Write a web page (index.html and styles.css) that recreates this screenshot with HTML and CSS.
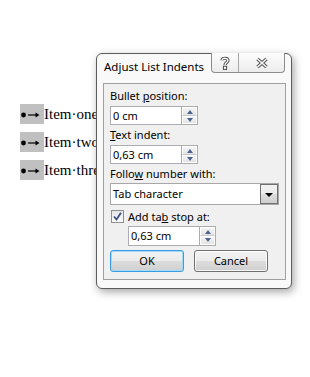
FILE: index.html
```html
<!DOCTYPE html>
<html lang="en">

<head>
    <meta charset="UTF-8">
    <title>Adjust List Indents</title>
    <link rel="stylesheet" href="styles.css">
</head>

<body>
    <div class="doc">
        <div class="item">
            <span class="mark">
                <svg width="24" height="20" viewBox="0 0 24 20">
                    <circle cx="3.5" cy="11" r="2.4" fill="#000" />
                    <path d="M8 11H17" stroke="#000" stroke-width="1.2" />
                    <path d="M15.5 8.6L19.5 11L15.5 13.4Z" fill="#000" />
                </svg>
            </span>
            <span class="item-text">Item·one</span>
        </div>
        <div class="item">
            <span class="mark">
                <svg width="24" height="20" viewBox="0 0 24 20">
                    <circle cx="3.5" cy="11" r="2.4" fill="#000" />
                    <path d="M8 11H17" stroke="#000" stroke-width="1.2" />
                    <path d="M15.5 8.6L19.5 11L15.5 13.4Z" fill="#000" />
                </svg>
            </span>
            <span class="item-text">Item·two</span>
        </div>
        <div class="item">
            <span class="mark">
                <svg width="24" height="20" viewBox="0 0 24 20">
                    <circle cx="3.5" cy="11" r="2.4" fill="#000" />
                    <path d="M8 11H17" stroke="#000" stroke-width="1.2" />
                    <path d="M15.5 8.6L19.5 11L15.5 13.4Z" fill="#000" />
                </svg>
            </span>
            <span class="item-text">Item·three</span>
        </div>
    </div>

    <div class="dialog">
        <div class="titlebar">
            <span class="title">Adjust List Indents</span>
            <div class="caption-btns">
                <span class="cap-btn help">
                    <svg width="12" height="14" viewBox="0 0 12 14">
                        <path d="M3 4.2C3 1.6 9 1.6 9 4.4C9 6.6 6 6.4 6 9" fill="none" stroke="#4a4a4a" stroke-width="3.2" />
                        <path d="M3 4.2C3 1.6 9 1.6 9 4.4C9 6.6 6 6.4 6 9" fill="none" stroke="#fff" stroke-width="1.3" />
                        <rect x="4.4" y="10.2" width="3.2" height="3.2" fill="#fff" stroke="#4a4a4a" stroke-width="1" />
                    </svg>
                </span>
                <span class="cap-btn close">
                    <svg width="14" height="12" viewBox="0 0 14 12">
                        <path d="M2.5 2L11.5 10M11.5 2L2.5 10" stroke="#555" stroke-width="3.6" />
                        <path d="M2.5 2L11.5 10M11.5 2L2.5 10" stroke="#f4f4f4" stroke-width="1.6" />
                    </svg>
                </span>
            </div>
        </div>

        <div class="panel">
            <div class="label">Bullet <u>p</u>osition:</div>
            <div class="spin">
                <div class="edit">0 cm</div>
                <div class="updown">
                    <span class="ud up"></span>
                    <span class="ud down"></span>
                </div>
            </div>

            <div class="label"><u>T</u>ext indent:</div>
            <div class="spin">
                <div class="edit">0,63 cm</div>
                <div class="updown">
                    <span class="ud up"></span>
                    <span class="ud down"></span>
                </div>
            </div>

            <div class="label label-tight">Follo<u>w</u> number with:</div>
            <div class="select">
                <span class="select-text">Tab character</span>
                <span class="select-btn"></span>
            </div>

            <div class="check-row">
                <span class="checkbox">
                    <svg width="11" height="11" viewBox="0 0 11 11">
                        <path d="M2 5.5L4.5 8.5L9 1.8" fill="none" stroke="#3d5488" stroke-width="1.9" />
                    </svg>
                </span>
                <span>Add ta<u>b</u> stop at:</span>
            </div>

            <div class="spin spin-indent">
                <div class="edit">0,63 cm</div>
                <div class="updown">
                    <span class="ud up"></span>
                    <span class="ud down"></span>
                </div>
            </div>

            <div class="buttons">
                <span class="btn btn-default">OK</span>
                <span class="btn">Cancel</span>
            </div>
        </div>
    </div>
</body>

</html>
```

FILE: styles.css
```css
* {
    margin: 0;
    padding: 0;
    box-sizing: border-box;
}

body {
    width: 310px;
    height: 377px;
    background: #fff;
    position: relative;
    overflow: hidden;
    font-family: "Liberation Serif", serif;
}

/* document behind the dialog */

.doc {
    padding: 104px 0 0 20px;
    display: flex;
    flex-direction: column;
    gap: 8px;
}

.item {
    display: flex;
    align-items: center;
    height: 20px;
    font-size: 15px;
    line-height: 20px;
    color: #000;
}

.mark {
    display: block;
    width: 24px;
    height: 20px;
    background: #c0c0c0;
}

.mark svg {
    display: block;
}

/* dialog */

.dialog {
    position: absolute;
    left: 96px;
    top: 53px;
    width: 196px;
    height: 236px;
    border: 1px solid #5c5c5c;
    border-radius: 6px;
    background: #f9f9f9;
    box-shadow: 2px 3px 8px rgba(0, 0, 0, 0.35);
    padding: 0 5px 0 6px;
    font-family: "Noto Sans", sans-serif;
    font-size: 11px;
    color: #000;
}

.titlebar {
    display: flex;
    height: 29px;
    padding-left: 1px;
}

.title {
    flex: 1;
    padding-top: 5px;
    font-size: 11.5px;
    line-height: 16px;
}

.caption-btns {
    display: flex;
    height: 20px;
    margin: -1px 1px 0 0;
    border: 1px solid #8c8c8c;
    border-top: none;
    border-radius: 0 0 4px 4px;
    background: linear-gradient(#fdfdfd, #ececec);
    overflow: hidden;
}

.cap-btn {
    display: flex;
    align-items: center;
    justify-content: center;
}

.cap-btn svg {
    display: block;
}

.help {
    width: 27px;
    border-right: 1px solid #a8a8a8;
}

.close {
    width: 45px;
}

.panel {
    height: 197px;
    border: 1px solid #a0a0a0;
    background: #f0f0f0;
    padding: 4px 6px 6px 6px;
}

.label {
    line-height: 16px;
    margin-bottom: 2px;
}

.label-tight {
    margin-bottom: 1px;
}

.spin {
    display: flex;
    width: 88px;
    height: 19px;
    margin-bottom: 2px;
}

.edit {
    flex: 1;
    background: #fff;
    border: 1px solid #abadb3;
    border-right: none;
    padding-left: 2px;
    line-height: 17px;
}

.updown {
    width: 17px;
    border: 1px solid #acacac;
    display: flex;
    flex-direction: column;
    background: #fff;
}

.ud {
    flex: 1;
    position: relative;
    background: linear-gradient(#f4f4f4, #e4e4e4);
    border: 1px solid #fff;
}

.ud.up {
    border-bottom: 1px solid #c9c9c9;
}

.ud::after {
    content: "";
    position: absolute;
    left: 4px;
    top: 2px;
    border-left: 3.5px solid transparent;
    border-right: 3.5px solid transparent;
}

.up::after {
    border-bottom: 4px solid #4c6392;
}

.down::after {
    top: 1px;
    border-top: 4px solid #4c6392;
}

.select {
    display: flex;
    width: 169px;
    height: 22px;
    border: 1px solid #a7a7a7;
    background: #fff;
}

.select-text {
    flex: 1;
    padding-left: 2px;
    line-height: 20px;
}

.select-btn {
    width: 18px;
    border: 1px solid #707070;
    background: linear-gradient(#f2f2f2 0, #ebebeb 50%, #dddddd 50%, #cfcfcf 100%);
    position: relative;
}

.select-btn::after {
    content: "";
    position: absolute;
    left: 4px;
    top: 8px;
    border-left: 4px solid transparent;
    border-right: 4px solid transparent;
    border-top: 4px solid #000;
}

.check-row {
    display: flex;
    align-items: center;
    gap: 4px;
    height: 16px;
    margin-top: 3px;
    padding-left: 1px;
}

.checkbox {
    width: 13px;
    height: 13px;
    border: 1px solid #8e8f8f;
    background: linear-gradient(#e6e6e6, #fbfbfb);
    display: flex;
    align-items: center;
    justify-content: center;
}

.checkbox svg {
    display: block;
}

.spin-indent {
    height: 20px;
    margin: 2px 0 0 18px;
}

.spin-indent .edit {
    line-height: 18px;
}

.buttons {
    display: flex;
    gap: 10px;
    margin-top: 4px;
}

.btn {
    width: 74px;
    height: 22px;
    border: 1px solid #707070;
    border-radius: 3px;
    background: linear-gradient(#f2f2f2 0, #ebebeb 50%, #dddddd 50%, #cfcfcf 100%);
    box-shadow: inset 0 0 0 1px rgba(255, 255, 255, 0.8);
    text-align: center;
    line-height: 20px;
}

.btn-default {
    border-color: #3c9ae0;
    box-shadow: inset 0 0 0 1px #9fdcf9;
}
```
